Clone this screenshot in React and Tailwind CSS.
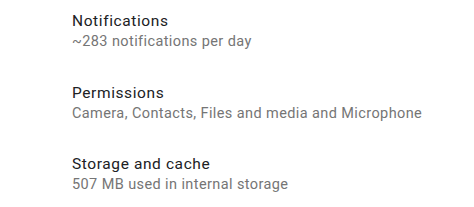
import React from 'react';

const rows = [
  { title: 'Notifications', sub: '~283 notifications per day' },
  { title: 'Permissions', sub: 'Camera, Contacts, Files and media and Microphone' },
  { title: 'Storage and cache', sub: '507 MB used in internal storage' },
];

const App = () => (
  <div className="w-[474px] h-[207px] bg-white overflow-hidden font-['Roboto',sans-serif]">
    <div className="flex flex-col pt-[12px]">
      {rows.map((row) => (
        <div key={row.title} className="h-[71.5px] pl-[72px]">
          <div className="text-[15.5px] leading-[18px] tracking-[0.6px] text-[#202124]">{row.title}</div>
          <div className="mt-[3px] text-[14.5px] leading-[17px] tracking-[0.4px] text-[#757575]">{row.sub}</div>
        </div>
      ))}
    </div>
  </div>
);

export default App;
